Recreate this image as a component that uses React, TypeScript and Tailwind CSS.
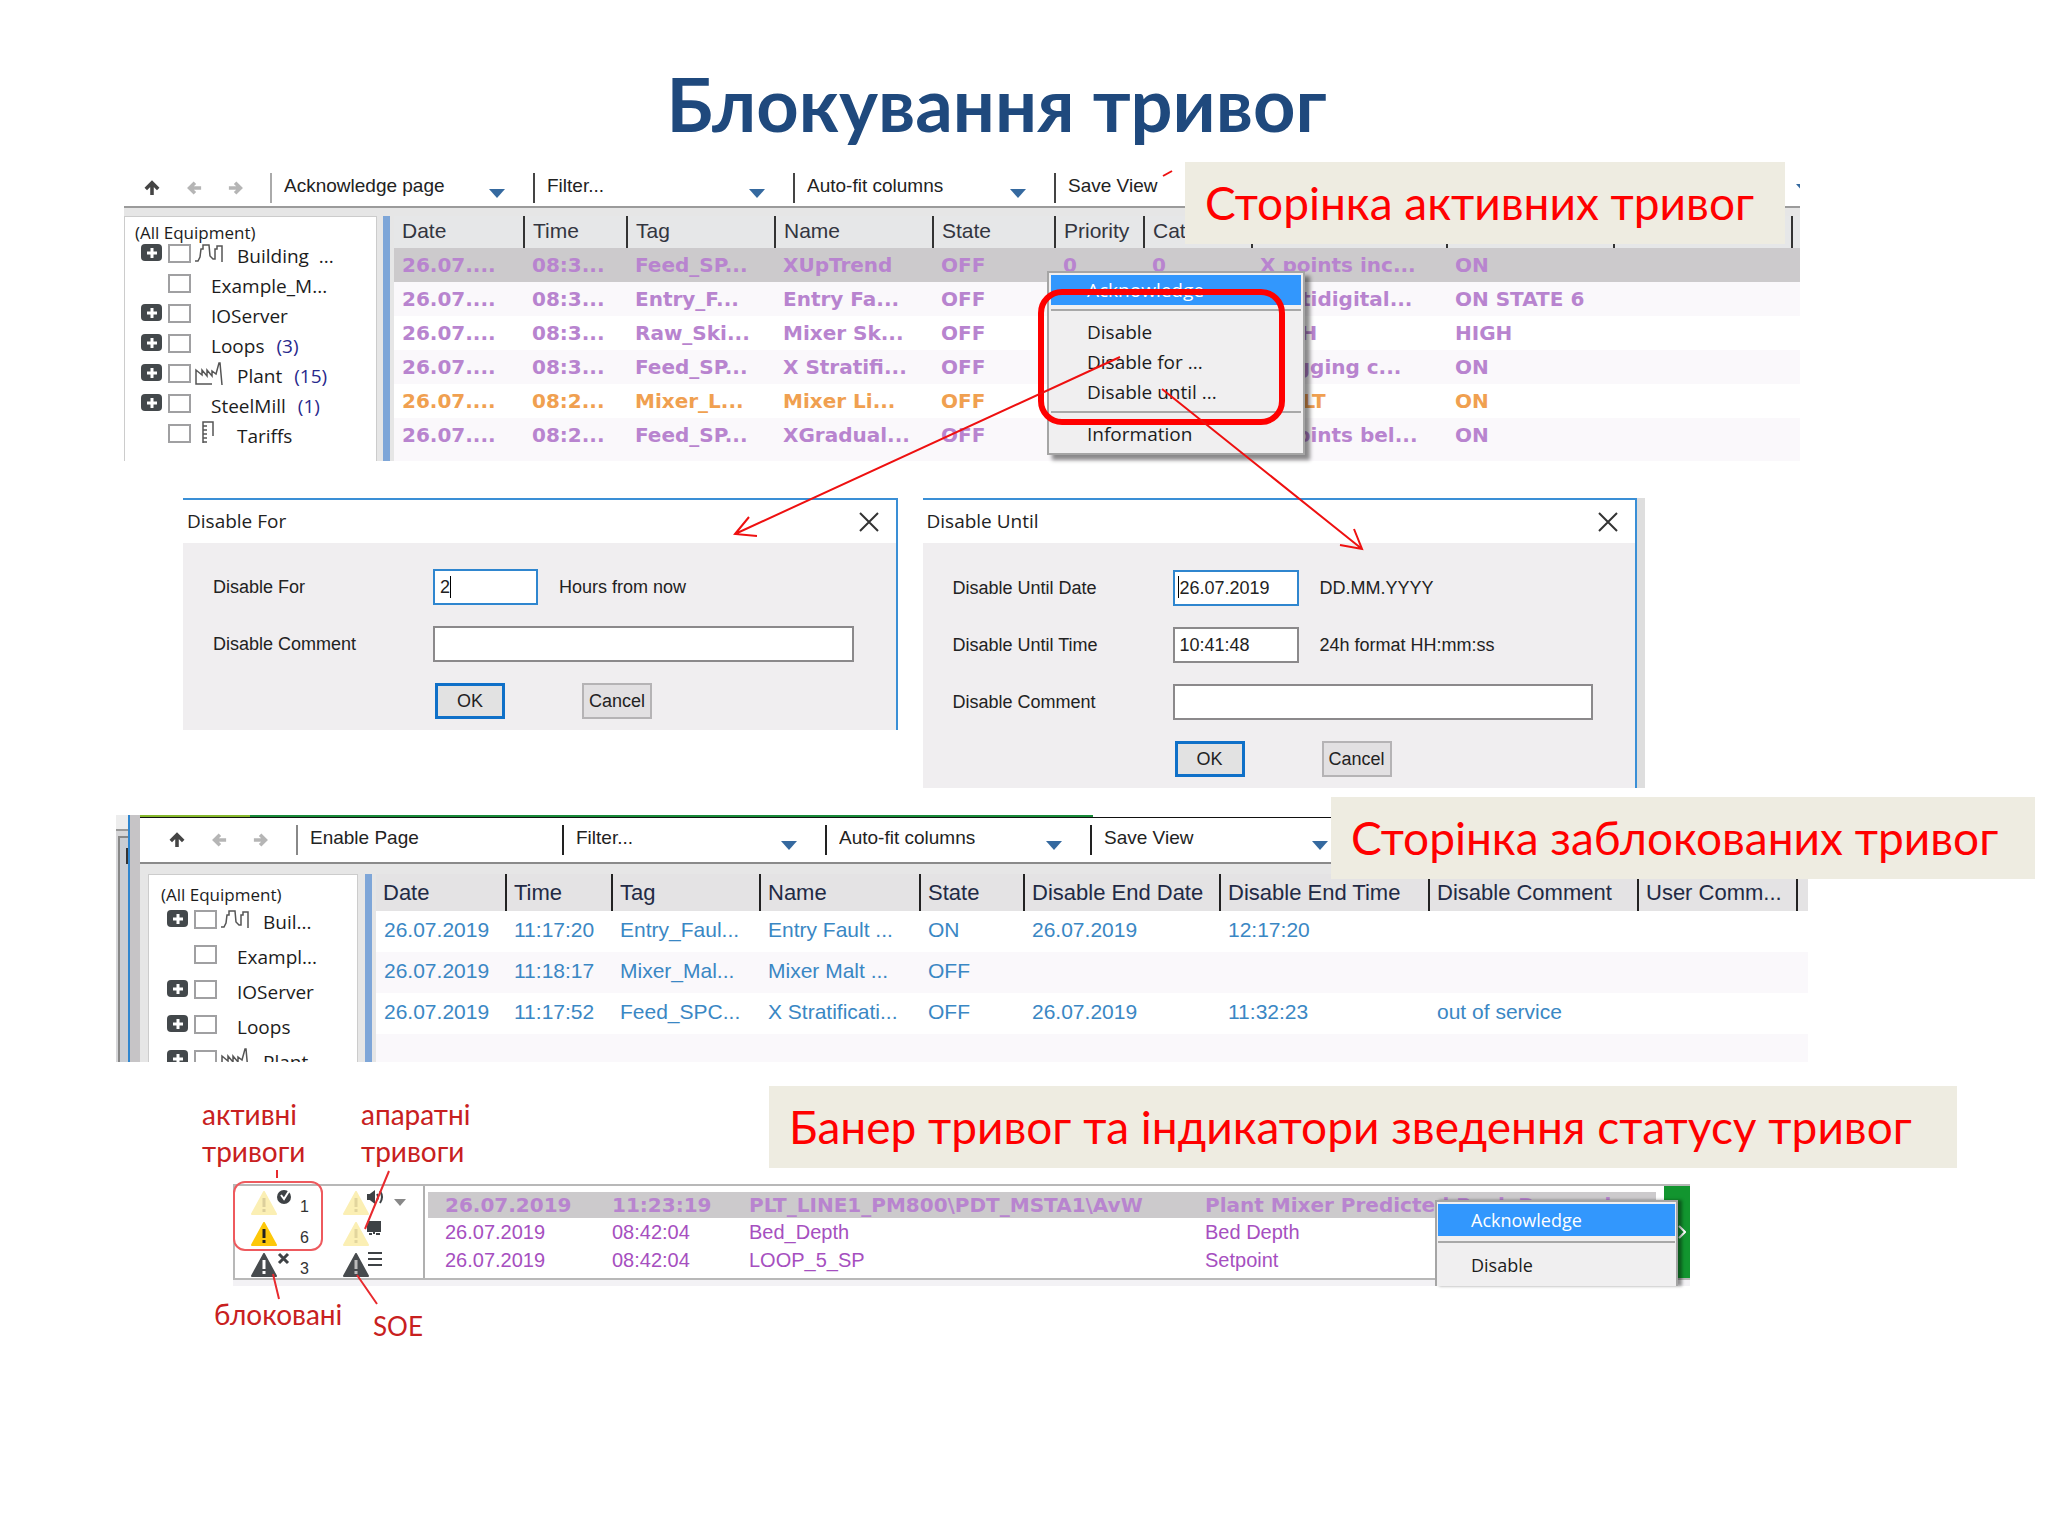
import type { ReactNode } from "react";

type TreeNode = { name: string; count?: string; icon?: "wave" | "plant" | "meter"; expandable?: boolean };

const activeTree: TreeNode[] = [
  { name: "Building  ...", icon: "wave", expandable: true },
  { name: "Example_M..." },
  { name: "IOServer", expandable: true },
  { name: "Loops", count: "(3)", expandable: true },
  { name: "Plant", count: "(15)", icon: "plant", expandable: true },
  { name: "SteelMill", count: "(1)", expandable: true },
  { name: "Tariffs", icon: "meter" },
];

const disabledTree: TreeNode[] = [
  { name: "Buil...", icon: "wave", expandable: true },
  { name: "Exampl..." },
  { name: "IOServer", expandable: true },
  { name: "Loops", expandable: true },
  { name: "Plant", icon: "plant", expandable: true },
];

const activeColumns = ["Date", "Time", "Tag", "Name", "State", "Priority", "Cat...", "", "", "", ""];

const activeRows = [
  ["26.07....", "08:3...", "Feed_SP...", "XUpTrend", "OFF", "0", "0", "X points inc...", "ON"],
  ["26.07....", "08:3...", "Entry_F...", "Entry Fa...", "OFF", "0", "0", "Multidigital...", "ON STATE 6"],
  ["26.07....", "08:3...", "Raw_Ski...", "Mixer Sk...", "OFF", "0", "0", "HIGH", "HIGH"],
  ["26.07....", "08:3...", "Feed_SP...", "X Stratifi...", "OFF", "0", "0", "Plugging c...", "ON"],
  ["26.07....", "08:2...", "Mixer_L...", "Mixer Li...", "OFF", "0", "0", "FAULT", "ON"],
  ["26.07....", "08:2...", "Feed_SP...", "XGradual...", "OFF", "0", "0", "X points bel...", "ON"],
];

const disabledColumns = [
  "Date", "Time", "Tag", "Name", "State", "Disable End Date", "Disable End Time", "Disable Comment", "User Comm...", "",
];

const disabledRows = [
  ["26.07.2019", "11:17:20", "Entry_Faul...", "Entry Fault ...", "ON", "26.07.2019", "12:17:20", "", ""],
  ["26.07.2019", "11:18:17", "Mixer_Mal...", "Mixer Malt ...", "OFF", "", "", "", ""],
  ["26.07.2019", "11:17:52", "Feed_SPC...", "X Stratificati...", "OFF", "26.07.2019", "11:32:23", "out of service", ""],
];

function Callout({ children, className }: { children: ReactNode; className: string }) {
  return (
    <p className={`bg-[#eeece1] text-[#ff0000] font-['Lato','Noto_Sans',sans-serif] text-[46px] leading-[82px] whitespace-nowrap ${className}`}>
      {children}
    </p>
  );
}

function NavArrow({ dir }: { dir: "up" | "left" | "right" }) {
  const path = {
    up: "M9 17V4M2 10l7-7 7 7",
    left: "M17 9H4M10 3L4 9l6 6",
    right: "M1 9h13M8 3l6 6-6 6",
  }[dir];
  return (
    <button type="button" aria-label={dir} className={`w-6 h-6 flex items-center justify-center ${dir === "up" ? "text-[#444]" : "text-[#b5b5b5]"}`}>
      <svg width="16" height="16" viewBox="0 0 18 18" fill="none" stroke="currentColor" strokeWidth="4">
        <path d={path} />
      </svg>
    </button>
  );
}

function Triangle({ className = "" }: { className?: string }) {
  return (
    <svg width="16" height="9" viewBox="0 0 16 9" className={className}>
      <path d="M0 0h16L8 9z" fill="#35699f" />
    </svg>
  );
}

function ToolSelect({ label, arrow = true, className }: { label: string; arrow?: boolean; className: string }) {
  return (
    <div className={`relative h-[30px] shrink-0 ${className}`}>
      <select aria-label={label} className="appearance-none w-full h-full bg-transparent pl-3 pb-1 text-[19px] leading-[26px] text-[#222] outline-none">
        <option>{label}</option>
      </select>
      {arrow && <Triangle className="absolute right-7 bottom-[5px] pointer-events-none" />}
    </div>
  );
}

function NodeIcon({ icon }: { icon: TreeNode["icon"] }) {
  if (!icon) return null;
  const path = {
    wave: "M0 17h3l2-4 1-8h2V1h6l1 11 3 3h2V5h2V2h5v16",
    plant: "M17 20H1V6l6 5V6l5 6V6l5 6V7l4 3 3-11h1l2 22",
    meter: "M8 19V-2h10v14M8 2h4M8 6h4M8 10h4M8 14h4M8 18h4",
  }[icon];
  return (
    <svg width="28" height="19" viewBox="0 0 28 19" className="ml-1 mr-[14px] shrink-0 overflow-visible" fill="none" stroke="#555" strokeWidth="1.5">
      <path d={path} />
    </svg>
  );
}

function Tree({ nodes, listClass, rowClass }: { nodes: TreeNode[]; listClass: string; rowClass: string }) {
  return (
    <div className="font-['Open_Sans','Noto_Sans',sans-serif] text-[19px] text-[#1c1c1c]">
      <p className="text-[17px] leading-4">(All Equipment)</p>
      <ul className={listClass}>
        {nodes.map((node) => (
          <li key={node.name} className={`flex items-start pl-[6px] pt-1 whitespace-pre ${rowClass}`}>
            <span className="w-[27px] shrink-0">
              {node.expandable && (
                <button type="button" aria-label={`Expand ${node.name}`} className="flex items-center justify-center w-[21px] h-[17px] rounded-[4px] bg-[#43484b]">
                  <svg width="12" height="12" viewBox="0 0 12 12" stroke="#fff" strokeWidth="3">
                    <path d="M6 1v10M1 6h10" />
                  </svg>
                </button>
              )}
            </span>
            <label className="flex items-start leading-6">
              <input type="checkbox" className="appearance-none w-[23px] h-[19px] shrink-0 bg-white border-2 border-[#a0a0a2]" />
              <NodeIcon icon={node.icon} />
              <span className={node.icon ? "" : "ml-5"}>{node.name}</span>
              {node.count && <span className="ml-3 text-[#28288c]">{node.count}</span>}
            </label>
          </li>
        ))}
      </ul>
    </div>
  );
}

function ActiveAlarms() {
  return (
    <section className="relative ml-[124px] mr-[248px] mt-3">
      <div className="h-[291px] overflow-hidden flex flex-col">
        <div className="flex items-center h-[38px] shrink-0 pl-4 border-b-2 border-[#9b9b9b]">
          <div className="flex gap-[18px] mr-[22px]">
            <NavArrow dir="up" />
            <NavArrow dir="left" />
            <NavArrow dir="right" />
          </div>
          <ToolSelect label="Acknowledge page" className="w-[263px] border-l-2 border-[#aaa]" />
          <ToolSelect label="Filter..." className="w-[260px] border-l-2 border-[#444]" />
          <ToolSelect label="Auto-fit columns" className="w-[261px] border-l-2 border-[#444]" />
          <ToolSelect label="Save View" className="w-[260px] border-l-2 border-[#444]" />
          <Triangle className="ml-auto -mr-3 shrink-0" />
        </div>
        <div className="flex flex-1 min-h-0 pt-2 bg-[#e6e6e6]">
          <div className="w-[253px] shrink-0 bg-white border border-b-0 border-[#ccc] pl-[10px] pt-2">
            <Tree nodes={activeTree} listClass="-mt-px" rowClass="h-[30px]" />
          </div>
          <div className="w-[7px] shrink-0 ml-[6px] bg-[#7ea6d8]" />
          <div className="flex-1 min-w-0 ml-1 bg-[#faf8fb]">
            <table className="w-full table-fixed border-collapse">
              <colgroup>
                <col className="w-[130px]" />
                <col className="w-[103px]" />
                <col className="w-[148px]" />
                <col className="w-[158px]" />
                <col className="w-[122px]" />
                <col className="w-[89px]" />
                <col className="w-[108px]" />
                <col className="w-[195px]" />
                <col className="w-[167px]" />
                <col className="w-[178px]" />
                <col />
              </colgroup>
              <thead>
                <tr className="h-8 bg-[#e6e7e8] text-left text-[21px] leading-6 text-[#33353f]">
                  {activeColumns.map((col, idx) => (
                    <th key={idx} className="p-0 pl-2 pb-[2px] font-normal border-r-2 border-[#333] last:border-r-0">{col}</th>
                  ))}
                </tr>
              </thead>
              <tbody className="font-['DejaVu_Sans',sans-serif] font-bold text-[20px] leading-6 whitespace-nowrap">
                {activeRows.map((row, idx) => (
                  <tr
                    key={idx}
                    className={`h-[34px] ${idx === 0 ? "bg-[#cccacc]" : idx % 2 ? "bg-[#faf8fb]" : "bg-white"} ${idx === 4 ? "text-[#f0a050]" : "text-[#b884cf]"}`}
                  >
                    {row.map((cell, i) => (
                      <td key={i} className="p-0 pl-2 pb-px">{cell}</td>
                    ))}
                    <td />
                    <td />
                  </tr>
                ))}
              </tbody>
            </table>
          </div>
        </div>
      </div>

      {/* Row context menu */}
      <div className="absolute left-[923px] top-[101px] w-[258px] h-[184px] bg-[#f0eff0] border-2 border-[#a5a5a5] shadow-[5px_5px_4px_rgba(0,0,0,0.45)] p-[2px] font-['Open_Sans','Noto_Sans',sans-serif] text-[19px] text-[#1c1c1c] flex flex-col">
        <button type="button" className="h-[30px] shrink-0 bg-[#3297fd] text-white text-left pl-9 leading-7">Acknowledge</button>
        <hr className="mt-1 mb-[6px] border-t-2 border-[#a8a8a8]" />
        <button type="button" className="h-[30px] shrink-0 text-left pl-9">Disable</button>
        <button type="button" className="h-[30px] shrink-0 text-left pl-9">Disable for ...</button>
        <button type="button" className="h-[30px] shrink-0 text-left pl-9">Disable until ...</button>
        <hr className="mt-1 mb-[6px] border-t-2 border-[#a8a8a8]" />
        <button type="button" className="h-[30px] shrink-0 text-left pl-9">Information</button>
      </div>

      <Callout className="absolute left-[1061px] -top-2 px-5 w-[600px]">Сторінка активних тривог</Callout>

      {/* Red frame and arrows to the dialogs */}
      <div className="absolute left-[914px] top-[119px] w-[247px] h-[136px] border-[6px] border-[#ff0000] rounded-[24px]" />
      <svg width="1300" height="400" viewBox="0 0 1300 400" className="absolute left-0 top-0 z-10 pointer-events-none" fill="none" stroke="#ee1010" strokeWidth="2">
        <path d="M1039 6l9-5" />
        <path d="M996 187L611 364M625 347l-14 17 22 2" />
        <path d="M1038 219l200 160M1230 359l8 20-22-4" />
      </svg>
    </section>
  );
}

function Dialog({ title, children, className }: { title: string; children: ReactNode; className: string }) {
  return (
    <form className={`bg-[#f0eef0] border-t-2 border-r-2 border-[#3a8fd6] text-[18px] text-[#222] ${className}`}>
      <div className="flex items-center justify-between h-[43px] bg-white pl-1 pr-[17px]">
        <h2 className="font-['Open_Sans','Noto_Sans',sans-serif] text-[19px]">{title}</h2>
        <button type="button" aria-label="Close">
          <svg width="20" height="20" viewBox="0 0 20 20" stroke="#333" strokeWidth="2">
            <path d="M1 1l18 18M19 1L1 19" />
          </svg>
        </button>
      </div>
      {children}
    </form>
  );
}

function DialogButtons() {
  return (
    <div className="flex">
      <button type="button" className="w-[70px] h-9 border-[3px] border-[#0f70c8] bg-[#e2e2e2] ml-[2px]">OK</button>
      <button type="button" className="w-[70px] h-9 border-2 border-[#b5b3b5] bg-[#e2e0e2] ml-[77px]">Cancel</button>
    </div>
  );
}

function Dialogs() {
  return (
    <section className="flex items-start ml-[183px] mr-[411px] mt-[37px] gap-[25px]">
      <Dialog title="Disable For" className="flex-1 h-[232px]">
        <div className="grid grid-cols-[220px_1fr] gap-y-[21px] pl-[30px] pr-[42px] pt-[26px] items-center">
          <label htmlFor="hours">Disable For</label>
          <div className="flex items-center">
            <div className="relative">
              <input id="hours" defaultValue="2" className="block w-[105px] h-9 px-[5px] bg-white border-2 border-[#2f86cf] outline-none" />
              <span className="absolute left-[17px] top-[7px] w-px h-[22px] bg-black" />
            </div>
            <span className="ml-[21px]">Hours from now</span>
          </div>
          <label htmlFor="for-comment">Disable Comment</label>
          <input id="for-comment" className="w-full h-9 px-[5px] bg-white border-2 border-[#8b898b] outline-none" />
          <span />
          <DialogButtons />
        </div>
      </Dialog>
      <Dialog title="Disable Until" className="flex-1 h-[290px] shadow-[8px_0_0_#dedede]">
        <div className="grid grid-cols-[220px_1fr] gap-y-[21px] pl-[30px] pr-[42px] pt-[27px] items-center">
          <label htmlFor="until-date">Disable Until Date</label>
          <div className="flex items-center">
            <div className="relative">
              <input id="until-date" defaultValue="26.07.2019" className="block w-[126px] h-9 px-[5px] bg-white border-2 border-[#2f86cf] outline-none" />
              <span className="absolute left-[5px] top-[6px] w-px h-[22px] bg-black" />
            </div>
            <span className="ml-[21px]">DD.MM.YYYY</span>
          </div>
          <label htmlFor="until-time">Disable Until Time</label>
          <div className="flex items-center">
            <input id="until-time" defaultValue="10:41:48" className="block w-[126px] h-9 px-[5px] bg-white border-2 border-[#8b898b] outline-none" />
            <span className="ml-[21px]">24h format HH:mm:ss</span>
          </div>
          <label htmlFor="until-comment">Disable Comment</label>
          <input id="until-comment" className="w-full h-9 px-[5px] bg-white border-2 border-[#8b898b] outline-none" />
          <span />
          <DialogButtons />
        </div>
      </Dialog>
    </section>
  );
}

function DisabledAlarms() {
  return (
    <section className="relative ml-[116px] mr-[240px] mt-[27px]">
      <div className="flex h-[247px] overflow-hidden">
        {/* Edge of the window behind */}
        <div className="w-3 shrink-0 bg-[#d6d6d8]">
          <div className="h-4 bg-[#ededed] border-b-2 border-[#999]" />
          <div className="ml-[2px] mt-[5px] h-full bg-[#c9cdd3] border-l-2 border-t-2 border-[#888]">
            <div className="ml-[6px] mt-[10px] w-[2px] h-4 bg-[#333]" />
          </div>
        </div>
        <div className="w-[2px] shrink-0 bg-[#2f86cf]" />
        <div className="w-[10px] shrink-0 bg-[#c6c4c6]" />
        <div className="flex-1 min-w-0 flex flex-col">
          <div className="flex h-[3px] shrink-0 border-b border-[#111]">
            <div className="w-[110px] bg-[#86b82c]" />
            <div className="w-[843px] bg-[#188a38]" />
          </div>
          <div className="flex items-center h-[46px] shrink-0 pl-[25px] border-b-2 border-[#8a8a8a]">
            <div className="flex gap-[18px] mr-[23px]">
              <NavArrow dir="up" />
              <NavArrow dir="left" />
              <NavArrow dir="right" />
            </div>
            <ToolSelect label="Enable Page" arrow={false} className="w-[266px] border-l-2 border-[#888]" />
            <ToolSelect label="Filter..." className="w-[263px] border-l-2 border-[#222]" />
            <ToolSelect label="Auto-fit columns" className="w-[265px] border-l-2 border-[#222]" />
            <ToolSelect label="Save View" className="w-[266px] border-l-2 border-[#222]" />
          </div>
          <div className="flex flex-1 min-h-0 pt-[10px] pl-2 bg-[#e6e6e6]">
            <div className="w-[210px] shrink-0 bg-white border border-b-0 border-[#ccc] pl-3 pt-3">
              <Tree nodes={disabledTree} listClass="mt-[3px]" rowClass="h-[35px]" />
            </div>
            <div className="w-[7px] shrink-0 ml-[7px] bg-[#7ea6d8]" />
            <div className="flex-1 min-w-0 ml-1 bg-[#faf8fb]">
              <table className="w-full table-fixed border-collapse">
                <colgroup>
                  <col className="w-[130px]" />
                  <col className="w-[106px]" />
                  <col className="w-[148px]" />
                  <col className="w-[160px]" />
                  <col className="w-[104px]" />
                  <col className="w-[196px]" />
                  <col className="w-[209px]" />
                  <col className="w-[209px]" />
                  <col className="w-[159px]" />
                  <col />
                </colgroup>
                <thead>
                  <tr className="h-[37px] bg-[#e4e3e4] text-left text-[22px] leading-6 text-[#222a44] whitespace-nowrap">
                    {disabledColumns.map((col, idx) => (
                      <th key={idx} className="p-0 pl-[7px] font-normal border-r-2 border-[#222] last:border-r-0">{col}</th>
                    ))}
                  </tr>
                </thead>
                <tbody className="text-[21px] leading-6 text-[#3a87c4] whitespace-nowrap">
                  {disabledRows.map((row, idx) => (
                    <tr key={idx} className={`h-[41px] ${idx % 2 ? "bg-[#faf8fb]" : "bg-white"}`}>
                      {row.map((cell, i) => (
                        <td key={i} className="p-0 pl-2 pb-[3px]">{cell}</td>
                      ))}
                      <td />
                    </tr>
                  ))}
                </tbody>
              </table>
            </div>
          </div>
        </div>
      </div>
      <Callout className="absolute left-[1215px] -top-[18px] px-5 w-[704px]">Сторінка заблокованих тривог</Callout>
    </section>
  );
}

function Warning({ fill, mark }: { fill: string; mark: string }) {
  return (
    <svg width="26" height="24" viewBox="0 0 26 24" className="shrink-0">
      <path d="M13 1L25 23H1z" fill={fill} stroke={fill} strokeWidth="2" strokeLinejoin="round" />
      <path d="M13 7v9M13 18v3" stroke={mark} strokeWidth="3" />
    </svg>
  );
}

const indicators = [
  { fill: "#fbefb4", mark: "#dccf9c", count: "1", left: "check", fill2: "#fbefb4", mark2: "#e2d59d", right: "sound" },
  { fill: "#fdc80a", mark: "#222222", count: "6", left: "", fill2: "#fbefb4", mark2: "#e2d59d", right: "screen" },
  { fill: "#474b4e", mark: "#ffffff", count: "3", left: "cross", fill2: "#474b4e", mark2: "#bbbbbb", right: "list" },
];

function Badge({ kind }: { kind: string }) {
  return (
    <svg width="18" height="16" viewBox="0 0 18 16" className="shrink-0 mt-[2px] mb-auto" fill="none" stroke="#3e4245" strokeWidth="2">
      {kind === "check" && (
        <>
          <circle cx="8" cy="8" r="7" fill="#3e4245" stroke="none" />
          <path d="M5 6l3 4 5-8" stroke="#fff" />
        </>
      )}
      {kind === "cross" && <path d="M3 3l9 9M12 3l-9 9" strokeWidth="3" />}
      {kind === "sound" && (
        <>
          <path d="M1 6h2l4-3v10l-4-3H1z" fill="#3e4245" />
          <path d="M10 5q2 3 0 6M13 2q4 6 0 12" />
        </>
      )}
      {kind === "screen" && <path d="M1 2h12v9H1zM2 14h3M9 14h4M7 10v4" fill="#3e4245" />}
      {kind === "list" && <path d="M1 2h14M1 8h14M1 14h14" />}
    </svg>
  );
}

function Banner() {
  return (
    <section className="relative mt-6">
      <div className="flex items-start justify-between h-[82px] pl-[202px] pr-[91px] text-[#c82020]">
        <div className="flex font-['Lato','Noto_Sans',sans-serif] text-[28px] leading-[37px] pt-[10px]">
          <p className="w-[159px]">активні<br />тривоги</p>
          <p>апаратні<br />тривоги</p>
        </div>
        <Callout className="px-5 w-[1188px]">Банер тривог та індикатори зведення статусу тривог</Callout>
      </div>

      <div className="relative ml-[233px] mr-[358px] mt-4">
        <div className="flex h-24 bg-white border-2 border-r-0 border-[#b8b8b8]">
          <ul className="w-[190px] shrink-0 border-r-2 border-[#b0b0b0] pl-4 pt-px">
            {indicators.map((row) => (
              <li key={row.count} className="flex items-center h-[31px]">
                <Warning fill={row.fill} mark={row.mark} />
                <span className="w-[18px] -ml-px self-stretch flex"><Badge kind={row.left} /></span>
                <span className="w-8 pl-[6px] pt-2 text-base leading-5 text-[#333]">{row.count}</span>
                <span className="ml-[17px] flex"><Warning fill={row.fill2} mark={row.mark2} /></span>
                <span className="w-[18px] -ml-[2px] self-stretch flex"><Badge kind={row.right} /></span>
                {row.right === "sound" && (
                  <svg width="12" height="7" viewBox="0 0 12 7" className="ml-[9px] shrink-0">
                    <path d="M0 0h12L6 7z" fill="#888" />
                  </svg>
                )}
              </li>
            ))}
          </ul>
          <table className="flex-1 block ml-[3px] mt-[6px] text-[20px] leading-[28px] text-[#a64fc0] whitespace-nowrap">
            <tbody className="block">
              <tr className="grid grid-cols-[167px_137px_456px_1fr] pl-[17px] mr-2 bg-[#cccacc] font-['DejaVu_Sans',sans-serif] font-bold text-[20px] leading-[26px] text-[#b884cf]">
                <td>26.07.2019</td>
                <td>11:23:19</td>
                <td>PLT_LINE1_PM800\PDT_MSTA1\AvW</td>
                <td>Plant Mixer Predicted Peak Demand</td>
              </tr>
              <tr className="grid grid-cols-[167px_137px_456px_1fr] pl-[17px]">
                <td>26.07.2019</td>
                <td>08:42:04</td>
                <td>Bed_Depth</td>
                <td>Bed Depth</td>
              </tr>
              <tr className="grid grid-cols-[167px_137px_456px_1fr] pl-[17px]">
                <td>26.07.2019</td>
                <td>08:42:04</td>
                <td>LOOP_5_SP</td>
                <td>Setpoint</td>
              </tr>
            </tbody>
          </table>
          <button type="button" aria-label="Next alarm" className="w-[26px] shrink-0 bg-[#12952f] flex items-center justify-end pr-1">
            <svg width="8" height="14" viewBox="0 0 8 14" fill="none" stroke="#fff" strokeWidth="2">
              <path d="M1 1l6 6-6 6" />
            </svg>
          </button>
        </div>
        <div className="h-[6px] bg-[#f3f2f5]" />

        {/* Banner context menu, cut off by the window edge */}
        <div className="absolute right-3 bottom-0 w-[243px] h-[86px] bg-[#f0eff0] border-2 border-b-0 border-[#a5a5a5] shadow-[4px_0_3px_rgba(0,0,0,0.4)] pt-[2px] px-px font-['Open_Sans','Noto_Sans',sans-serif] text-[18px] text-[#1c1c1c] flex flex-col">
          <button type="button" className="h-8 shrink-0 bg-[#3297fd] text-white text-left pl-[33px]">Acknowledge</button>
          <hr className="mt-[5px] mb-[6px] border-t-2 border-[#a8a8a8]" />
          <button type="button" className="h-8 shrink-0 text-left pl-[33px]">Disable</button>
        </div>

        <div className="absolute left-0 -top-[3px] w-[90px] h-[70px] border-2 border-[#ee5a5e] rounded-xl" />
      </div>

      <div className="flex items-start pl-[214px] pt-[10px] font-['Lato','Noto_Sans',sans-serif] text-[28px] leading-[36px] text-[#c82020]">
        <p className="w-[159px]">блоковані</p>
        <p className="pt-3 text-[26px]">SOE</p>
      </div>

      <svg width="500" height="240" viewBox="0 0 500 240" className="absolute left-0 top-0 pointer-events-none" fill="none" stroke="#e82a2e" strokeWidth="2">
        <path d="M277 84v8M389 85l-24 58M273 188l6 25M357 189l20 29" />
      </svg>
    </section>
  );
}

export default function App() {
  return (
    <main className="min-h-screen bg-white pb-10 overflow-hidden font-['Liberation_Sans',Arial,sans-serif]">
      <h1 className="pt-[50px] pr-[55px] text-center font-['Lato','Noto_Sans',sans-serif] font-bold text-[74px] leading-[108px] text-[#1f497d]">
        Блокування тривог
      </h1>
      <ActiveAlarms />
      <Dialogs />
      <DisabledAlarms />
      <Banner />
    </main>
  );
}
